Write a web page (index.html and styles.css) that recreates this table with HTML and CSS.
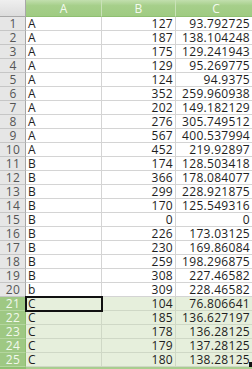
FILE: index.html
```html
<!DOCTYPE html>
<html>
<head>
<meta charset="utf-8">
<link rel="stylesheet" href="styles.css">
</head>
<body>
<div class="sheet">
  <div class="grid">
    <div class="corner"></div>
    <div class="colhead">A</div>
    <div class="colhead">B</div>
    <div class="colhead last">C</div>

    <div class="rh">1</div><div class="c txt">A</div><div class="c num">127</div><div class="c num">93.792725</div>
    <div class="rh">2</div><div class="c txt">A</div><div class="c num">187</div><div class="c num">138.104248</div>
    <div class="rh">3</div><div class="c txt">A</div><div class="c num">175</div><div class="c num">129.241943</div>
    <div class="rh">4</div><div class="c txt">A</div><div class="c num">129</div><div class="c num">95.269775</div>
    <div class="rh">5</div><div class="c txt">A</div><div class="c num">124</div><div class="c num">94.9375</div>
    <div class="rh">6</div><div class="c txt">A</div><div class="c num">352</div><div class="c num">259.960938</div>
    <div class="rh">7</div><div class="c txt">A</div><div class="c num">202</div><div class="c num">149.182129</div>
    <div class="rh">8</div><div class="c txt">A</div><div class="c num">276</div><div class="c num">305.749512</div>
    <div class="rh">9</div><div class="c txt">A</div><div class="c num">567</div><div class="c num">400.537994</div>
    <div class="rh">10</div><div class="c txt">A</div><div class="c num">452</div><div class="c num">219.92897</div>
    <div class="rh">11</div><div class="c txt">B</div><div class="c num">174</div><div class="c num">128.503418</div>
    <div class="rh">12</div><div class="c txt">B</div><div class="c num">366</div><div class="c num">178.084077</div>
    <div class="rh">13</div><div class="c txt">B</div><div class="c num">299</div><div class="c num">228.921875</div>
    <div class="rh">14</div><div class="c txt">B</div><div class="c num">170</div><div class="c num">125.549316</div>
    <div class="rh">15</div><div class="c txt">B</div><div class="c num">0</div><div class="c num">0</div>
    <div class="rh">16</div><div class="c txt">B</div><div class="c num">226</div><div class="c num">173.03125</div>
    <div class="rh">17</div><div class="c txt">B</div><div class="c num">230</div><div class="c num">169.86084</div>
    <div class="rh">18</div><div class="c txt">B</div><div class="c num">259</div><div class="c num">198.296875</div>
    <div class="rh">19</div><div class="c txt">B</div><div class="c num">308</div><div class="c num">227.46582</div>
    <div class="rh">20</div><div class="c txt">b</div><div class="c num">309</div><div class="c num">228.46582</div>

    <div class="rh sel">21</div><div class="c txt sel active">C</div><div class="c num sel">104</div><div class="c num sel">76.806641</div>
    <div class="rh sel">22</div><div class="c txt sel">C</div><div class="c num sel">185</div><div class="c num sel">136.627197</div>
    <div class="rh sel">23</div><div class="c txt sel">C</div><div class="c num sel">178</div><div class="c num sel">136.28125</div>
    <div class="rh sel">24</div><div class="c txt sel">C</div><div class="c num sel">179</div><div class="c num sel">137.28125</div>
    <div class="rh sel">25</div><div class="c txt sel">C</div><div class="c num sel">180</div><div class="c num sel">138.28125</div>
  </div>
  <div class="bottom"><div class="bh"></div><div class="bd"></div></div>
  <div class="handle"></div>
</div>
</body>
</html>
```

FILE: styles.css
```css
html, body {
  margin: 0;
  padding: 0;
  background: #ffffff;
  overflow: hidden;
}
.sheet {
  position: relative;
  width: 252px;
  height: 369px;
  overflow: hidden;
  font-family: "Open Sans", "DejaVu Sans", sans-serif;
  font-size: 12px;
  color: #1e1e1e;
}
.grid {
  display: grid;
  grid-template-columns: 26px 76px 74px 80px;
  grid-template-rows: 17px repeat(25, 14px);
  width: 256px;
}
.corner {
  background: linear-gradient(#efefef, #dcdcdc);
  border-right: 1px solid #a8a8a8;
  border-bottom: 1px solid #a8a8a8;
  box-sizing: border-box;
}
.colhead {
  box-sizing: border-box;
  background: linear-gradient(#c2dfae 0%, #a6cf8a 35%, #9fcb82 100%);
  border-right: 1px solid #c9e2b8;
  border-bottom: 1px solid #8fbf71;
  color: #f4faef;
  text-align: center;
  line-height: 17px;
  font-size: 12px;
}
.colhead.last { border-right: none; }
.rh {
  box-sizing: border-box;
  background: #e6e6e6;
  border-right: 1px solid #a6a6a6;
  border-bottom: 1px solid #c6c6c6;
  color: #555;
  text-align: center;
  line-height: 14px;
  font-size: 12px;
  letter-spacing: 0.3px;
  padding-left: 1px;
}
.rh.sel {
  background: #9ec883;
  color: #f2f8ec;
  border-bottom: 1px solid #b4d69e;
  border-right: 1px solid #8fbf71;
}
.c {
  box-sizing: border-box;
  border-right: 1px solid #d4d4d4;
  border-bottom: 1px solid #d4d4d4;
  line-height: 14px;
  white-space: nowrap;
  overflow: hidden;
  letter-spacing: 0.3px;
}
.c.sel {
  background: #e6efdc;
  border-right-color: #cfd8c6;
  border-bottom-color: #cfd8c6;
}
.txt { padding-left: 2px; }
.num { text-align: right; padding-right: 2px; }
.grid > .num:nth-child(4n) { padding-right: 5px; }
.active {
  outline: 2px solid #111;
  outline-offset: -1px;
  position: relative;
}
.bottom {
  display: grid;
  grid-template-columns: 26px 1fr;
  height: 3px;
}
.bh { background: #8fbf71; }
.bd { background: #a9cd8f; }
.handle {
  position: absolute;
  left: 249px;
  top: 362px;
  width: 4px;
  height: 5px;
  background: #111;
}
```
